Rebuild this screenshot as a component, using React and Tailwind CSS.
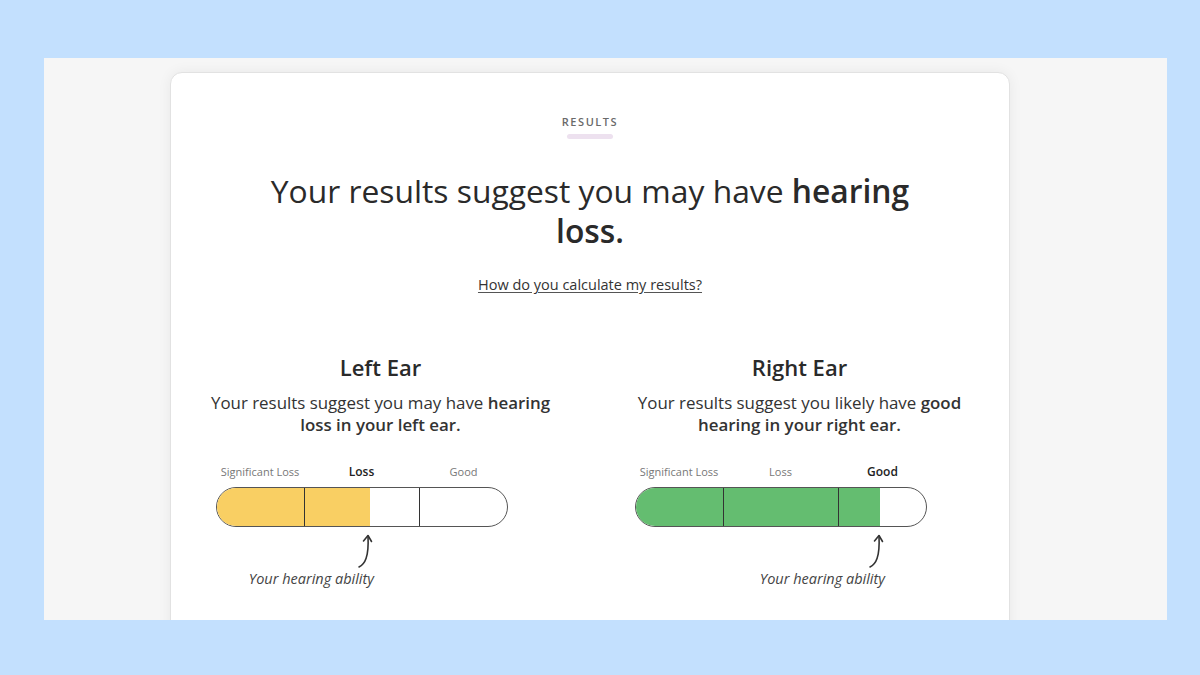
import React from 'react';

function Arrow() {
  return (
    <svg width="20" height="36" viewBox="0 0 20 36" fill="none" stroke="#333" strokeWidth="1.6" strokeLinecap="round" strokeLinejoin="round">
      <path d="M3 34 C 9 31, 13 24, 12 3" />
      <path d="M7.5 8 L12 2.5 L15.5 8.5" />
    </svg>
  );
}

function EarMeter({ fill, color, active, arrowX }) {
  const labels = [
    { name: 'Significant Loss', w: 'w-[88px]' },
    { name: 'Loss', w: 'w-[115px]' },
    { name: 'Good', w: 'w-[89px]' },
  ];
  return (
    <div className="w-[292px] ml-[45px]">
      <div className="flex items-end h-[20px]">
        {labels.map((l) => (
          <div
            key={l.name}
            className={`${l.w} text-center ${
              l.name === active ? 'text-[12px] font-semibold text-[#222]' : 'text-[11px] text-[#777]'
            }`}
          >
            {l.name}
          </div>
        ))}
      </div>
      <div className="relative mt-[6px] h-[40px] rounded-full border border-[#555] overflow-hidden bg-white">
        <div className="absolute inset-y-0 left-0" style={{ width: fill, background: color }} />
        <div className="absolute inset-y-0 left-[87px] w-px bg-[#333]" />
        <div className="absolute inset-y-0 left-[202px] w-px bg-[#333]" />
      </div>
      <div className="relative h-[60px]">
        <div className="absolute top-[6px]" style={{ left: arrowX - 12 }}>
          <Arrow />
        </div>
        <div
          className="absolute top-[41px] text-[14.5px] italic text-[#444] whitespace-nowrap"
          style={{ right: 292 - arrowX - 6 }}
        >
          Your hearing ability
        </div>
      </div>
    </div>
  );
}

export default function App() {
  return (
    <div
      className="w-[1200px] h-[675px] bg-[#c3e0fe] pt-[58px] pl-[44px]"
      style={{ fontFamily: '"Open Sans", "Noto Sans", sans-serif' }}
    >
      <div className="w-[1123px] h-[562px] bg-[#f6f6f6] overflow-hidden pt-[14px] pl-[126px]">
        <div className="w-[840px] h-[600px] bg-white rounded-xl border border-[#e2e2e2] shadow-[0_0_14px_rgba(0,0,0,0.06)] pt-[42px]">
          <div className="flex flex-col items-center">
            <div className="text-[11px] tracking-[0.14em] text-[#6a6a6a] font-semibold leading-[14px]">RESULTS</div>
            <div className="mt-[5px] w-[46px] h-[5px] rounded-full bg-[#ede1ef]" />
            <h1 className="mt-[32px] w-[680px] text-center text-[31.8px] leading-[40px] text-[#2a2a2a]">
              Your results suggest you may have <span className="font-semibold">hearing loss.</span>
            </h1>
            <a href="#" className="mt-[23px] text-[14.5px] text-[#333] underline underline-offset-2 decoration-[#555]">
              How do you calculate my results?
            </a>
          </div>
          <div className="grid grid-cols-2 mt-[56px]">
            <div className="flex flex-col items-center">
              <h2 className="text-[22px] font-semibold text-[#2a2a2a] leading-[30px]">Left Ear</h2>
              <p className="mt-[10px] w-[360px] text-center text-[16.9px] leading-[22px] text-[#333]">
                Your results suggest you may have <span className="font-semibold">hearing loss in your left ear.</span>
              </p>
              <div className="mt-[25px] w-full">
                <EarMeter fill="153px" color="#f9cf63" active="Loss" arrowX={152} />
              </div>
            </div>
            <div className="flex flex-col items-center">
              <h2 className="text-[22px] font-semibold text-[#2a2a2a] leading-[30px]">Right Ear</h2>
              <p className="mt-[10px] w-[360px] text-center text-[16.9px] leading-[22px] text-[#333]">
                Your results suggest you likely have <span className="font-semibold">good hearing in your right ear.</span>
              </p>
              <div className="mt-[25px] w-full">
                <EarMeter fill="244px" color="#64bd70" active="Good" arrowX={244} />
              </div>
            </div>
          </div>
        </div>
      </div>
    </div>
  );
}
